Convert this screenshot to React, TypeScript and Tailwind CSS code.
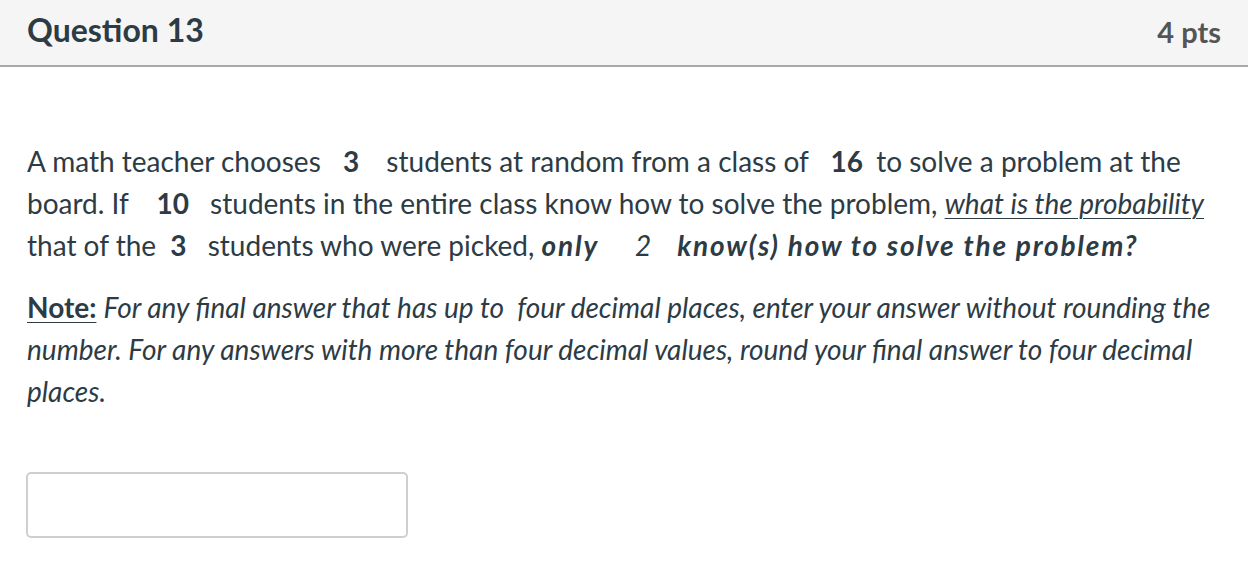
const Num = ({ children, className = "" }: { children: React.ReactNode; className?: string }) => (
  <span className={`font-bold ${className}`}>{children}</span>
);

export default function App() {
  return (
    <div className="min-h-screen bg-white text-[#2d3b45]" style={{ fontFamily: "Lato, 'Liberation Sans', sans-serif" }}>
      <div className="flex items-center justify-between h-[67px] px-[27px] bg-[#f5f5f5] border-b-2 border-[#a8a8a8]">
        <h2 className="text-[32px] font-bold leading-none -mt-[5px]">Question 13</h2>
        <div className="text-[29px] font-bold text-[#555] leading-none -mt-[3px]">4 pts</div>
      </div>

      <div className="px-[27px] pt-[73px] text-[28px] leading-[42px]">
        <p>
          A math teacher chooses <Num className="ml-[15px] mr-[20px]">3</Num> students at random from a class of{" "}
          <Num className="ml-[15px] mr-[6px]">16</Num> to solve a problem at the board. If{" "}
          <Num className="ml-[21px] mr-[14px]">10</Num> students in the entire class know how to solve the problem,{" "}
          <span className="italic underline underline-offset-4 decoration-1">what is the probability</span> that of the{" "}
          <Num className="ml-[7px] mr-[14px]">3</Num> students who were picked,{" "}
          <span className="font-bold italic tracking-[1.8px]">only</span>
          <span className="italic ml-[36px] mr-[26px]">2</span>
          <span className="font-bold italic tracking-[1.8px]">know(s) how to solve the problem?</span>
        </p>

        <p className="mt-[20px]">
          <span className="font-bold underline underline-offset-4 decoration-1">Note:</span>{" "}
          <em>
            For any final answer that has up to&nbsp; four decimal places, enter your answer without rounding the
            number. For any answers with more than four decimal values, round your final answer to four decimal
            places.
          </em>
        </p>

        <input
          type="text"
          className="mt-[60px] block w-[382px] h-[66px] border-2 border-[#cfcfcf] rounded-[5px] bg-white -ml-[1px]"
        />
      </div>
    </div>
  );
}
